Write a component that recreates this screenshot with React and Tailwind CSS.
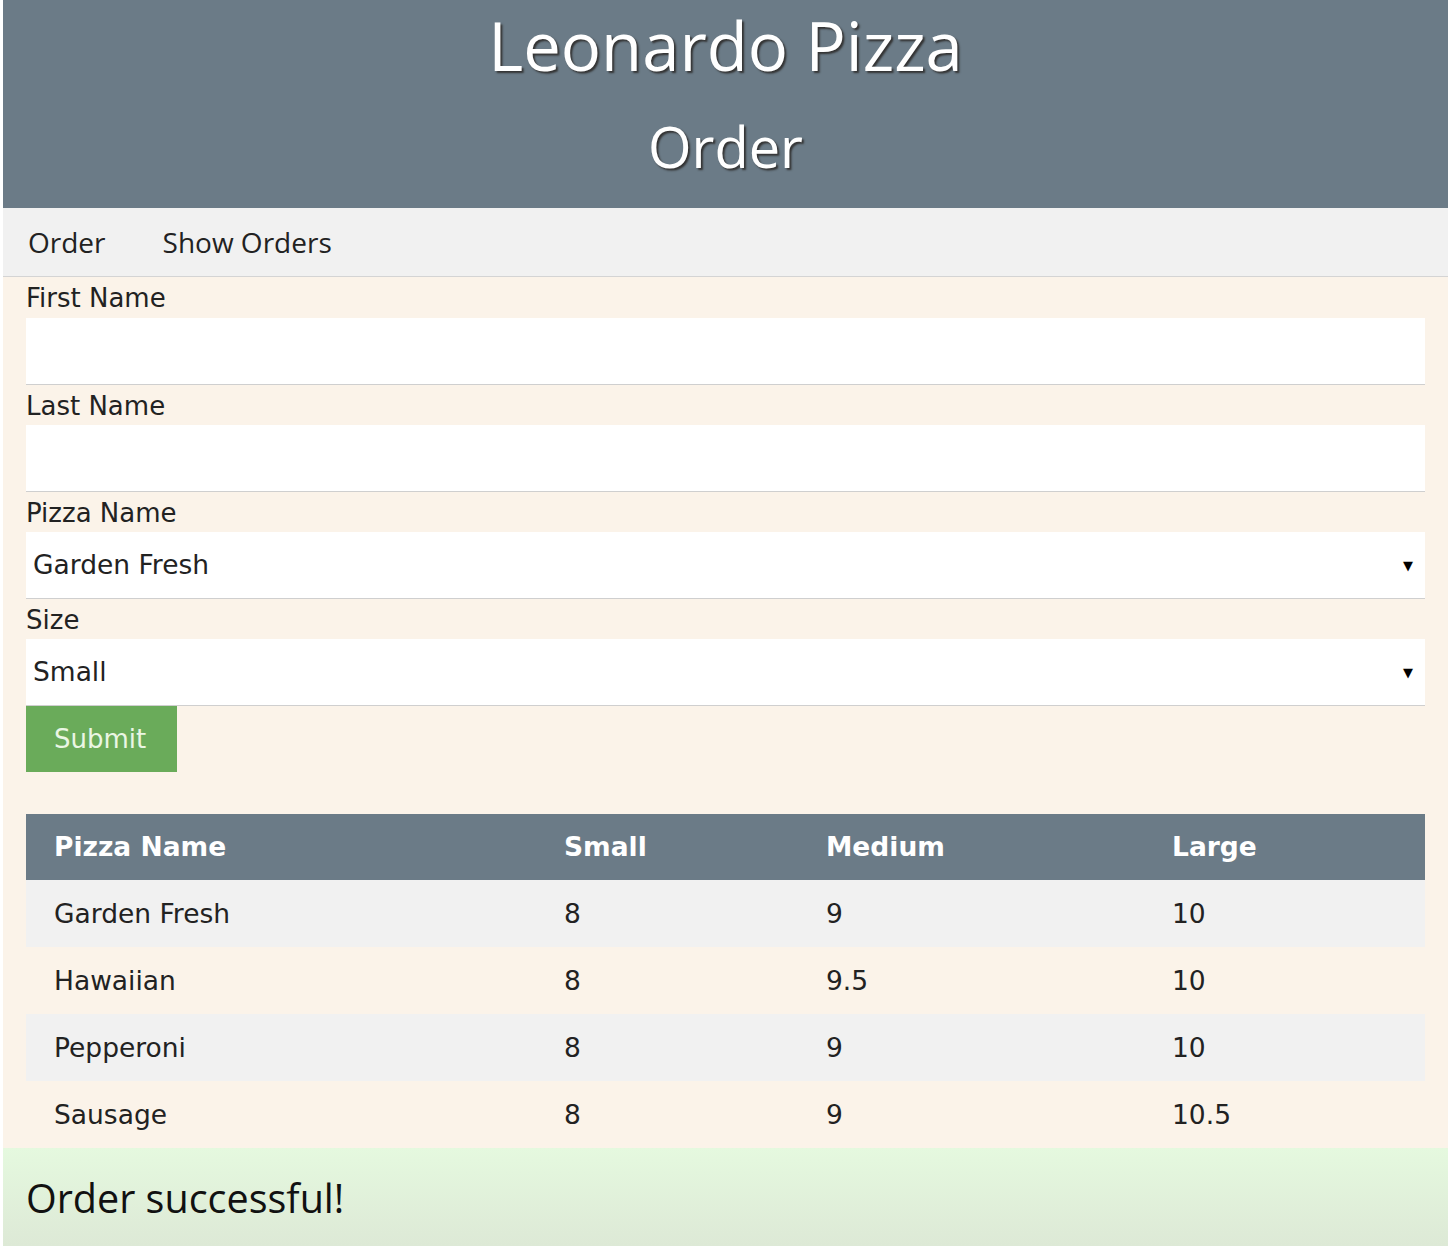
import React, { useState } from "react";

const pizzas = [
  { name: "Garden Fresh", small: "8", medium: "9", large: "10" },
  { name: "Hawaiian", small: "8", medium: "9.5", large: "10" },
  { name: "Pepperoni", small: "8", medium: "9", large: "10" },
  { name: "Sausage", small: "8", medium: "9", large: "10.5" },
];

const verdana = { fontFamily: "'DejaVu Sans', Verdana, sans-serif" };

function Select({ value, options, onChange }) {
  return (
    <div className="relative">
      <select
        value={value}
        onChange={(e) => onChange(e.target.value)}
        className="appearance-none w-full h-[67px] bg-white border-b border-[#cfcfcf] px-[7px] text-[26.5px] text-[#222] outline-none"
        style={verdana}
      >
        {options.map((o) => (
          <option key={o}>{o}</option>
        ))}
      </select>
      <span className="pointer-events-none absolute right-[12px] top-[24px] text-[13px] text-black">▼</span>
    </div>
  );
}

export default function App() {
  const [first, setFirst] = useState("");
  const [last, setLast] = useState("");
  const [pizza, setPizza] = useState("Garden Fresh");
  const [size, setSize] = useState("Small");

  return (
    <div className="min-h-[1246px] bg-white pl-[3px]" style={{ fontFamily: "'Open Sans', sans-serif" }}>
      {/* header */}
      <header className="h-[208px] bg-[#6b7b87] flex flex-col items-center text-white [text-shadow:2px_2px_2px_#333]">
        <h1 className="text-[67px] leading-[80px] mt-[5px] px-[6px]">Leonardo Pizza</h1>
        <h2 className="text-[56px] leading-[64px] mt-[29px] px-[6px]">Order</h2>
      </header>

      {/* nav */}
      <nav className="h-[69px] bg-[#f1f1f1] border-b border-[#d4d4d4] flex items-center gap-[57px] pl-[25px] text-[28px] text-[#222]">
        <a href="#">Order</a>
        <a href="#">Show Orders</a>
      </nav>

      <main className="bg-[#fbf3e9] px-[23px] pb-0" style={verdana}>
        <form onSubmit={(e) => e.preventDefault()} className="flex flex-col">
          <label className="text-[26px] pt-[2px] leading-[39px] text-[#222]">First Name</label>
          <input
            value={first}
            onChange={(e) => setFirst(e.target.value)}
            className="h-[67px] bg-white border-b border-[#cfcfcf] px-[7px] text-[26px] outline-none"
          />
          <label className="text-[26px] pt-[2px] leading-[38px] text-[#222]">Last Name</label>
          <input
            value={last}
            onChange={(e) => setLast(e.target.value)}
            className="h-[67px] bg-white border-b border-[#cfcfcf] px-[7px] text-[26px] outline-none"
          />
          <label className="text-[26px] pt-[2px] leading-[38px] text-[#222]">Pizza Name</label>
          <Select value={pizza} onChange={setPizza} options={pizzas.map((p) => p.name)} />
          <label className="text-[26px] pt-[2px] leading-[38px] text-[#222]">Size</label>
          <Select value={size} onChange={setSize} options={["Small", "Medium", "Large"]} />
          <div>
            <button
              type="submit"
              className="h-[66px] w-[151px] bg-[#6aab5a] text-[#eaf6e4] text-[26px] text-left pl-[28px]"
            >
              Submit
            </button>
          </div>
        </form>

        {/* price table */}
        <div className="mt-[42px] text-[26.5px]">
          <div className="grid grid-cols-[510px_262px_346px_280px] h-[66px] items-center bg-[#6b7b87] text-white font-bold">
            <div className="pl-[28px]">Pizza Name</div>
            <div className="pl-[28px]">Small</div>
            <div className="pl-[28px]">Medium</div>
            <div className="pl-[28px]">Large</div>
          </div>
          {pizzas.map((p, i) => (
            <div
              key={p.name}
              className={
                "grid grid-cols-[510px_262px_346px_280px] h-[67px] items-center text-[#222] " +
                (i % 2 === 0 ? "bg-[#f1f1f1]" : "bg-[#fbf3e9]")
              }
            >
              <div className="pl-[28px]">{p.name}</div>
              <div className="pl-[28px]">{p.small}</div>
              <div className="pl-[28px]">{p.medium}</div>
              <div className="pl-[28px]">{p.large}</div>
            </div>
          ))}
        </div>
      </main>

      {/* status */}
      <div className="h-[98px] bg-gradient-to-b from-[#e5f9df] to-[#dde9d6] flex items-center pl-[23px] pt-[4px] text-[39.5px] text-[#111]">
        Order successful!
      </div>
    </div>
  );
}
